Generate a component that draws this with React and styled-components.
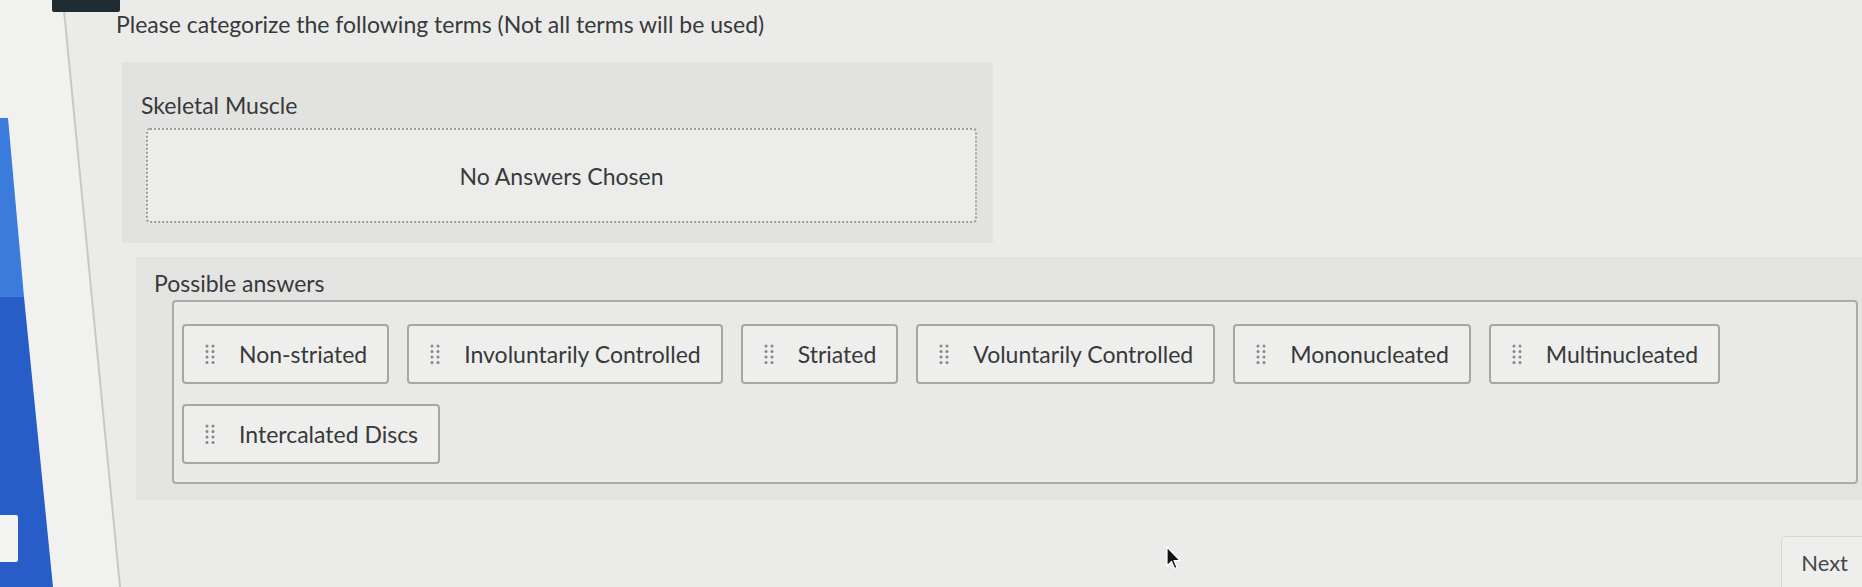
import React from 'react';
import styled, { createGlobalStyle } from 'styled-components';

const GlobalStyle = createGlobalStyle`
  html, body {
    margin: 0;
    padding: 0;
    background: #ebebe9;
  }
  body {
    font-family: Lato, "Open Sans", "Liberation Sans", sans-serif;
    color: #3b3e40;
    overflow: hidden;
  }
`;

const Page = styled.div`
  position: relative;
  display: flex;
  width: 1862px;
  height: 587px;
  overflow: hidden;
  background: #ebebe9;
`;

const Gutter = styled.div`
  flex: 0 0 96px;
  height: 587px;
  overflow: visible;
  background: #f1f1ef;

  svg {
    display: block;
    overflow: visible;
  }
`;

const TopTab = styled.div`
  position: absolute;
  left: 52px;
  top: 0;
  width: 68px;
  height: 12px;
  background: #1f2c31;
  border-radius: 0 0 2px 2px;
`;

const Main = styled.main`
  flex: 1;
  min-width: 0;
  padding: 10px 0 0 20px;
`;

const Title = styled.h1`
  margin: 0;
  font-size: 23px;
  font-weight: 400;
  line-height: 28px;
  color: #37393b;
`;

const Question = styled.section`
  margin-top: 24px;
  margin-left: 6px;
`;

const CategoryPanel = styled.div`
  width: 871px;
  box-sizing: border-box;
  padding: 29px 16px 20px 19px;
  background: #e2e3e1;
`;

const PanelLabel = styled.div`
  font-size: 23px;
  line-height: 28px;
  color: #37393b;
`;

const DropZone = styled.div`
  margin: 9px 0 0 5px;
  height: 95px;
  box-sizing: border-box;
  border: 2px dotted #9a9c9a;
  border-radius: 4px;
  background: #ececea;
  display: flex;
  align-items: center;
  justify-content: center;
  font-size: 23px;
  color: #37393b;
`;

const AnswersPanel = styled.div`
  margin: 14px -40px 0 20px;
  box-sizing: border-box;
  padding: 12px 0 16px 18px;
  background: #e3e4e2;
`;

const AnswerBank = styled.div`
  margin: 3px 0 0 18px;
  width: 1686px;
  box-sizing: border-box;
  padding: 22px 8px 18px;
  border: 2px solid #abacaa;
  border-radius: 4px;
  background: #e9eae8;
  display: flex;
  flex-wrap: wrap;
  gap: 20px 18px;
`;

const Chip = styled.div`
  height: 60px;
  box-sizing: border-box;
  padding: 0 20px 0 21px;
  border: 2px solid #a6a7a5;
  border-radius: 4px;
  background: #eeeeec;
  display: flex;
  align-items: center;
  gap: 24px;
  font-size: 23px;
  color: #37393b;
  white-space: nowrap;
`;

const Footer = styled.div`
  display: flex;
  justify-content: flex-end;
  margin: 36px -8px 0 0;
`;

const NextButton = styled.button`
  height: 64px;
  box-sizing: border-box;
  padding: 13px 21px 0 19px;
  border: 1px solid #d6d6d4;
  border-radius: 5px;
  background: #eeeeec;
  font-family: inherit;
  font-size: 22px;
  line-height: 26px;
  color: #45484a;
  display: flex;
  align-items: flex-start;
`;

const Cursor = styled.svg`
  position: absolute;
  left: 1165px;
  top: 545px;
`;

const DragHandle = () => (
  <svg width="10" height="22" viewBox="0 0 10 22" aria-hidden="true">
    {[3, 8.5, 14, 19.5].map((y) =>
      [2, 8].map((x) => <circle key={`${x}-${y}`} cx={x} cy={y} r="1.5" fill="#858788" />)
    )}
  </svg>
);

const answers = [
  'Non-striated',
  'Involuntarily Controlled',
  'Striated',
  'Voluntarily Controlled',
  'Mononucleated',
  'Multinucleated',
  'Intercalated Discs',
];

export default function App() {
  return (
    <>
      <GlobalStyle />
      <Page>
        <Gutter>
          <svg width="96" height="587">
            <polygon points="63,0 96,0 96,340" fill="#ebebe9" />
            <polygon points="96,340 120,587 96,587" fill="#f1f1ef" />
            <line x1="63" y1="0" x2="120" y2="587" stroke="#c8c8c6" strokeWidth="2" />
            <polygon points="0,118 8,118 24,297 0,297" fill="#3b7bdb" />
            <polygon points="0,297 24,297 53,587 0,587" fill="#285cc6" />
            <rect x="-4" y="515" width="22" height="47" rx="2" fill="#f4f4f2" />
          </svg>
        </Gutter>
        <TopTab />
        <Main>
          <Title>Please categorize the following terms (Not all terms will be used)</Title>
          <Question>
            <CategoryPanel>
              <PanelLabel>Skeletal Muscle</PanelLabel>
              <DropZone>No Answers Chosen</DropZone>
            </CategoryPanel>
          </Question>
          <AnswersPanel>
            <PanelLabel>Possible answers</PanelLabel>
            <AnswerBank>
              {answers.map((a) => (
                <Chip key={a}>
                  <DragHandle />
                  {a}
                </Chip>
              ))}
            </AnswerBank>
          </AnswersPanel>
          <Footer>
            <NextButton>Next</NextButton>
          </Footer>
        </Main>
        <Cursor width="16" height="26" viewBox="0 0 16 26">
          <path d="M2 2 L2 21 L6.5 16.5 L9.5 23.5 L12 22.5 L9 15.5 L15 15.5 Z" fill="#111" stroke="#fff" strokeWidth="1.2" strokeLinejoin="round" />
        </Cursor>
      </Page>
    </>
  );
}
